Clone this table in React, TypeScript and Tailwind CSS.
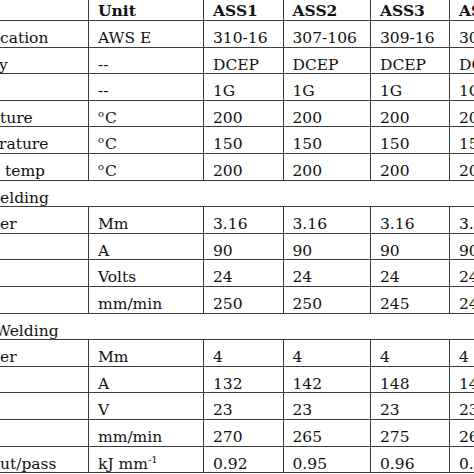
import React from 'react';

// Row data: label fragment (what is visible of the first column), its offset, unit, and values
interface Row {
  label: string;
  shift?: number;
  unit?: React.ReactNode;
  values?: string[];
  section?: boolean;
}

const deg = (
  <span>
    <sup className="text-[10px] top-[-6px] mr-[1px]">o</sup>C
  </span>
);

const rows: Row[] = [
  { label: 'cation', unit: 'AWS E', values: ['310-16', '307-106', '309-16', '308-16'] },
  { label: 'y', shift: -1, unit: '--', values: ['DCEP', 'DCEP', 'DCEP', 'DCEP'] },
  { label: '', unit: '--', values: ['1G', '1G', '1G', '1G'] },
  { label: 'ture', unit: deg, values: ['200', '200', '200', '200'] },
  { label: 'rature', shift: -1, unit: deg, values: ['150', '150', '150', '150'] },
  { label: 'temp', shift: 5, unit: deg, values: ['200', '200', '200', '200'] },
  { label: 'elding', section: true },
  { label: 'er', unit: 'Mm', values: ['3.16', '3.16', '3.16', '3.16'] },
  { label: '', unit: 'A', values: ['90', '90', '90', '90'] },
  { label: '', unit: 'Volts', values: ['24', '24', '24', '24'] },
  { label: '', unit: 'mm/min', values: ['250', '250', '245', '240'] },
  { label: 'Welding', shift: -5, section: true },
  { label: 'er', unit: 'Mm', values: ['4', '4', '4', '4'] },
  { label: '', unit: 'A', values: ['132', '142', '148', '145'] },
  { label: '', unit: 'V', values: ['23', '23', '23', '23'] },
  { label: '', unit: 'mm/min', values: ['270', '265', '275', '260'] },
  {
    label: 'ut/pass',
    unit: (
      <span>
        kJ mm<sup className="text-[10px] top-[-6px]">-1</sup>
      </span>
    ),
    values: ['0.92', '0.95', '0.96', '0.94'],
  },
];

const colWidths = ['w-[79.5px]', 'w-[87.5px]', 'w-[79px]', 'w-[80px]'];

const Cell: React.FC<{ className: string; bold?: boolean; children?: React.ReactNode }> = ({
  className,
  bold,
  children,
}) => (
  <div
    className={`${className} shrink-0 border-l border-[#3c3c3c] pl-[9px] pt-[9px] leading-[16px] whitespace-nowrap ${
      bold ? 'font-bold' : ''
    }`}
  >
    {children}
  </div>
);

const Label: React.FC<{ text: string; shift?: number }> = ({ text, shift = 0 }) => (
  <div className="w-[88px] shrink-0 overflow-hidden pt-[9px] leading-[16px] whitespace-nowrap">
    <span className="inline-block" style={{ marginLeft: shift }}>
      {text}
    </span>
  </div>
);

export default function App() {
  return (
    <div
      className="w-[474px] h-[474px] overflow-hidden bg-white text-[#111] text-[15.5px]"
      style={{ fontFamily: '"DejaVu Serif", "Liberation Serif", serif' }}
    >
      <div className="mt-[-5.6px] w-[560px]">
        {/* header */}
        <div className="flex h-[26.6px] border-b border-[#3c3c3c]">
          <Label text="" />
          <Cell className="w-[115px]" bold>
            Unit
          </Cell>
          {['ASS1', 'ASS2', 'ASS3', 'ASS4'].map((h, i) => (
            <Cell key={h} className={colWidths[i]} bold>
              {h}
            </Cell>
          ))}
        </div>

        {rows.map((row, idx) =>
          row.section ? (
            <div key={idx} className="flex h-[26.6px] border-b border-[#3c3c3c]">
              <div className="pt-[9px] leading-[16px] whitespace-nowrap">
                <span className="inline-block" style={{ marginLeft: row.shift || 0 }}>
                  {row.label}
                </span>
              </div>
            </div>
          ) : (
            <div key={idx} className="flex h-[26.6px] border-b border-[#3c3c3c]">
              <Label text={row.label} shift={row.shift} />
              <Cell className="w-[115px]">{row.unit}</Cell>
              {row.values?.map((v, i) => (
                <Cell key={i} className={colWidths[i]}>
                  {v}
                </Cell>
              ))}
            </div>
          )
        )}
      </div>
    </div>
  );
}
